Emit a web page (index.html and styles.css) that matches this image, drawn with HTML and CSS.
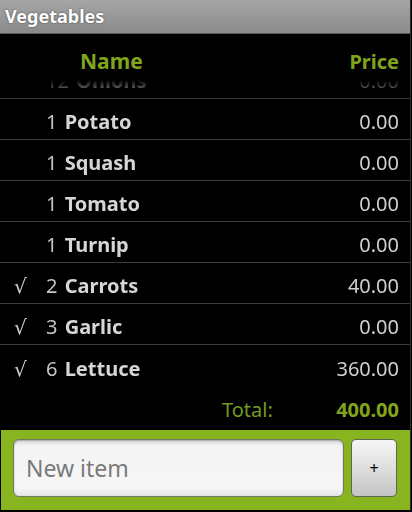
FILE: index.html
```html
<!DOCTYPE html>
<html lang="en">
  <head>
    <meta charset="UTF-8" />
    <meta name="viewport" content="width=device-width, initial-scale=1.0" />
    <title>Vegetables</title>
    <link rel="stylesheet" href="styles.css">
  </head>
  <body>
    <div class="screen">
      <div class="titlebar">Vegetables</div>

      <div class="colhead">
        <span class="h-name">Name</span>
        <span class="h-price">Price</span>
      </div>

      <div class="list">
        <ul class="rows">
          <li class="row"><span class="check"></span><span class="item"><span class="qty">12</span> <b>Onions</b></span><span class="price">0.00</span></li>
          <li class="row"><span class="check"></span><span class="item"><span class="qty">1</span> <b>Potato</b></span><span class="price">0.00</span></li>
          <li class="row"><span class="check"></span><span class="item"><span class="qty">1</span> <b>Squash</b></span><span class="price">0.00</span></li>
          <li class="row"><span class="check"></span><span class="item"><span class="qty">1</span> <b>Tomato</b></span><span class="price">0.00</span></li>
          <li class="row"><span class="check"></span><span class="item"><span class="qty">1</span> <b>Turnip</b></span><span class="price">0.00</span></li>
          <li class="row"><span class="check">√</span><span class="item"><span class="qty">2</span> <b>Carrots</b></span><span class="price">40.00</span></li>
          <li class="row"><span class="check">√</span><span class="item"><span class="qty">3</span> <b>Garlic</b></span><span class="price">0.00</span></li>
          <li class="row"><span class="check">√</span><span class="item"><span class="qty">6</span> <b>Lettuce</b></span><span class="price">360.00</span></li>
        </ul>
      </div>

      <div class="total">
        <span class="total-label">Total:</span>
        <span class="total-value">400.00</span>
      </div>

      <div class="entry">
        <input type="text" class="new-item" placeholder="New item" />
        <button class="add">+</button>
      </div>
    </div>
  </body>
</html>
```

FILE: styles.css
```css
body {
  margin: 0;
  background: #000;
  font-family: "Noto Sans", "DejaVu Sans", sans-serif;
  width: 412px;
  height: 512px;
  overflow: hidden;
}

.screen {
  width: 410px;
  height: 510px;
  border-right: 1px solid #2a2a2a;
  display: flex;
  flex-direction: column;
}

.titlebar {
  height: 33px;
  background: linear-gradient(#a6a6a6, #8a8a8a);
  border-bottom: 1px solid #5a5a5a;
  color: #fff;
  font-weight: bold;
  font-size: 18px;
  line-height: 33px;
  padding-left: 5px;
  text-shadow: 0 0 2px rgba(0, 0, 0, 0.6);
}

.colhead {
  height: 46px;
  display: flex;
  align-items: center;
  justify-content: space-between;
  padding: 8px 11px 0 80px;
  box-sizing: border-box;
  color: #80a41c;
  font-weight: bold;
  font-size: 21px;
}

.h-price {
  font-size: 20px;
}

.list {
  height: 305px;
  overflow: hidden;
  -webkit-mask-image: linear-gradient(to bottom, transparent 0, #000 20px);
  mask-image: linear-gradient(to bottom, transparent 0, #000 20px);
}

.rows {
  list-style: none;
  margin: -22px 0 0;
  padding: 0;
}

.row {
  height: 41px;
  display: flex;
  align-items: center;
  padding: 5px 11px 0 14px;
  box-sizing: border-box;
  font-size: 20px;
  color: #cfcfcf;
  border-bottom: 1px solid #3c3c3c;
}

.row:last-child {
  border-bottom: none;
}

.check {
  width: 32px;
  color: #cfcfcf;
}

.item {
  flex: 1;
}

.qty {
  color: #c4c4c4;
  margin-right: 2px;
}

.item b {
  color: #d6d6d6;
}

.price {
  color: #d0d0d0;
}

.total {
  height: 45px;
  display: flex;
  align-items: center;
  padding: 3px 11px 0 222px;
  box-sizing: border-box;
  font-size: 20px;
}

.total-label {
  flex: 1;
  color: #749a22;
}

.total-value {
  color: #80a41c;
  font-weight: bold;
}

.entry {
  height: 80px;
  background: #88b420;
  display: flex;
  gap: 7px;
  padding: 9px 13px 13px 12px;
  box-sizing: border-box;
  margin-left: 1px;
}

.new-item {
  flex: 1;
  min-width: 0;
  margin: 0;
  border: 1px solid #6f7a60;
  border-radius: 6px;
  background: linear-gradient(#dcdcdc, #f4f4f4 12%, #f6f6f6 85%, #e4e4e4);
  font-family: inherit;
  font-size: 23px;
  padding: 0 12px;
  color: #333;
  box-shadow: inset 0 1px 2px rgba(0, 0, 0, 0.25);
}

.new-item::placeholder {
  color: #7a7a7a;
}

.add {
  width: 46px;
  margin: 0;
  border: 1px solid #5e6650;
  border-radius: 5px;
  background: linear-gradient(#f6f6f6, #dcdcdc 55%, #c4c4c4);
  font-family: inherit;
  font-size: 16px;
  color: #000;
  padding: 0;
}
```
